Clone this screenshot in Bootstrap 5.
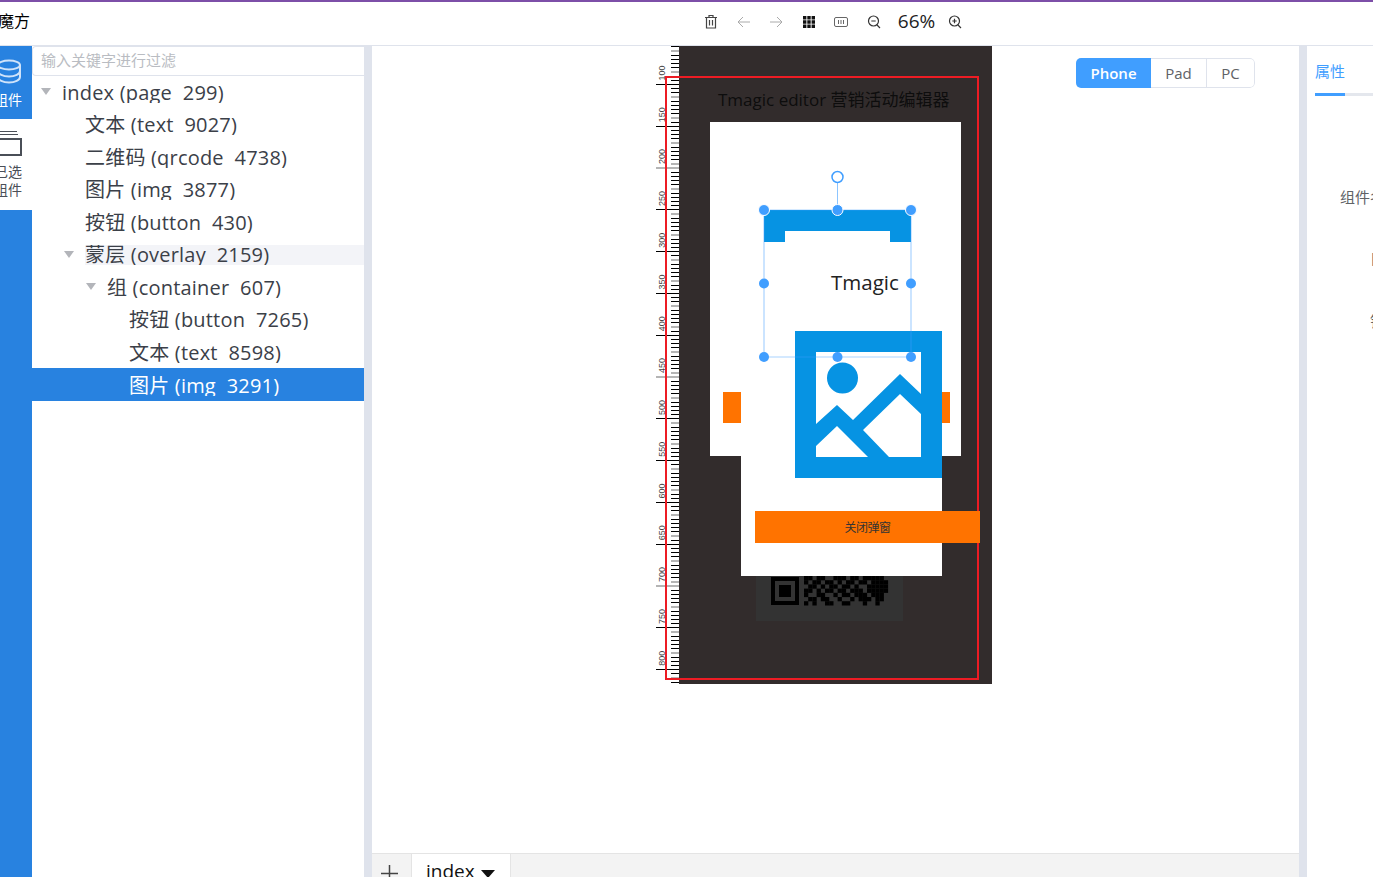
<!DOCTYPE html>
<html lang="zh">
<head>
  <meta charset="UTF-8">
  <meta name="viewport" content="width=device-width, initial-scale=1">
  <title>魔方</title>
  <link href="https://cdn.jsdelivr.net/npm/bootstrap@5.3.0/dist/css/bootstrap.min.css" rel="stylesheet">
  <style>
    html, body { height: 100%; overflow: hidden; }
    body { font-family: "Open Sans", "Noto Sans CJK SC", sans-serif; color: #303133; background: #fff; }
    .app-shell { height: 877px; border-top: 2px solid #7d4fa8; }
    .top-bar { height: 44px; border-bottom: 1px solid #dfe3ec; }
    .brand-name { width: 331px; margin-left: -2px; font-size: 16px; color: #000; margin-top: -5px; flex: none; }
    .tool-strip { margin-left: 366px; margin-bottom: 4px; }
    .tool-slot { width: 32.5px; height: 24px; display: flex; align-items: center; justify-content: center; }
    .zoom-text { font-size: 19px; color: #222; width: 49px; padding-left: 4px; text-align: center; margin-top: -1px; }

    .work-row { height: 831px; }
    .side-rail { width: 32px; background: #2882e0; flex: none; overflow: hidden; }
    .rail-item { height: 73px; background: #2882e0; color: #fff; font-size: 14px; line-height: 20px; overflow: hidden; white-space: nowrap; }
    .rail-item.rail-off { background: #fff; color: #4a4f57; height: 91px; line-height: 18px; }
    .rail-item svg { display: block; }
    .rail-text { margin-left: -6px; }

    .tree-pane { width: 332px; flex: none; position: relative; }
    .tree-filter { height: 29.5px; border: 1px solid #dfe3ec; border-width: 1px 0 1px 1px; border-radius: 4px 0 0 4px; font-size: 15px; color: #b9bcc2; padding: 1px 8px; line-height: 24px; white-space: nowrap; }
    .tree-row { height: 32.5px; display: flex; align-items: center; font-size: 20px; letter-spacing: .2px; color: #3b4048; white-space: pre; }
    .tree-row.picked { background: #2882e0; color: #fff; height: 33px; }
    .tree-label { display: block; height: 20px; line-height: 20px; overflow: hidden; margin-top: 2px; }
    .tree-row.hovered .tree-label { background: #f3f4f8; flex: 1; }
    .tree-caret { width: 0; height: 0; border: 5px solid transparent; border-top: 7px solid #b3b5ba; border-bottom: 0; margin-right: 11px; flex: none; }
    .lvl-0 { padding-left: 9px; }
    .lvl-1 { padding-left: 53px; }
    .lvl-1c { padding-left: 32px; }
    .lvl-2c { padding-left: 54px; }
    .lvl-3 { padding-left: 97px; }

    .split-bar { width: 8px; flex: none; background: #dfe3ec; }

    .stage { flex: 1; position: relative; overflow: hidden; background: #fff; }
    .stage-tabs { position: absolute; left: 0; right: 0; bottom: 0; height: 24px; background: #f3f3f3; border-top: 1px solid #e4e4e4; display: flex; overflow: hidden; }
    .tab-add { width: 40px; border-right: 1px solid #e4e4e4; padding: 11px 0 0 9px; }
    .tab-add svg { display: block; }
    .tab-page { width: 99px; background: #fff; border-right: 1px solid #e4e4e4; font-size: 19px; color: #111; padding: 0 0 0 14px; line-height: 34px; white-space: nowrap; }
    .tab-arrow { display: inline-block; width: 0; height: 0; border: 7px solid transparent; border-top: 8px solid #111; border-bottom: 0; margin-left: 6px; vertical-align: 0; }

    .view-switch { position: absolute; left: 704px; top: 12px; height: 30px; border-radius: 5px; overflow: hidden; display: flex; font-size: 15px; line-height: 28px; color: #606266; }
    .view-opt { text-align: center; background: #fff; border: 1px solid #dfe3ec; border-left: 0; }
    .view-opt.on { background: #409eff; color: #fff; font-weight: 600; border: 0; line-height: 30px; width: 75px; }
    .opt-pad { width: 56px; }
    .opt-pc { width: 48px; border-radius: 0 5px 5px 0; }

    /* canvas stage, coordinates relative to .stage */
    .ruler-art { position: absolute; left: 280px; top: 0; }
    .phone-bg { position: absolute; left: 307px; top: 0; width: 313px; height: 638px; background: #322c2c; }
    .phone-title { position: absolute; left: 346px; top: 42px; font-size: 17px; color: #0d0d0d; white-space: nowrap; line-height: 24px; }
    .white-slab { position: absolute; left: 338px; top: 75.500px; width: 251px; height: 334px; background: #fff; }
    .orange-left { position: absolute; left: 351px; top: 345.500px; width: 19px; height: 31px; background: #ff7300; }
    .orange-right { position: absolute; left: 568px; top: 345.500px; width: 10px; height: 31px; background: #ff7300; }
    .qr-tile { position: absolute; left: 384px; top: 530px; width: 147px; height: 45px; background: #333333; }
    .overlay-card { position: absolute; left: 369px; top: 196px; width: 201px; height: 334px; background: #fff; }
    .photo-a { position: absolute; left: 392px; top: 164px; }
    .photo-b { position: absolute; left: 423px; top: 284.500px; }
    .tmagic-word { position: absolute; left: 459px; top: 223px; font-size: 20.500px; line-height: 26px; color: #222; }
    .close-btn { position: absolute; left: 383px; top: 465px; width: 225px; height: 32px; background: #ff7300; color: #333; font-size: 12px; line-height: 33px; text-align: center; letter-spacing: -.5px; }
    .frame-red { position: absolute; left: 293px; top: 30px; width: 314px; height: 604px; border: 2px solid #ed1c24; pointer-events: none; }
    .select-art { position: absolute; left: 380px; top: 120px; }

    .prop-pane { width: 66px; flex: none; overflow: hidden; position: relative; font-size: 15px; color: #606266; }
    .prop-tab { color: #409eff; font-size: 15px; padding: 15px 0 0; margin-left: 8px; height: 50px; line-height: 20px; border-bottom: 3px solid #e4e7ed; position: relative; white-space: nowrap; }
    .prop-tab::after { content: ""; position: absolute; left: 0; width: 30px; bottom: -3px; height: 3px; background: #409eff; }
    .prop-field { position: absolute; white-space: nowrap; line-height: 20px; }
    .field-name { left: 33px; top: 141px; }
    .field-auto { left: 63px; top: 202px; }
    .field-lock { left: 63px; top: 265px; }
  </style>
</head>
<body>
  <div class="app-shell">
    <div class="top-bar d-flex align-items-center">
      <div class="brand-name">魔方</div>
      <div class="tool-strip d-flex align-items-center">
        <div class="tool-slot"><svg width="14" height="15" viewBox="0 0 14 15" fill="none" stroke="#444" stroke-width="1.200"><path d="M1 3.500h12M5 3.500V1.500h4v2M2.500 3.500v10.500h9V3.500M5.500 6v5.500M8.500 6v5.500"/></svg></div>
        <div class="tool-slot"><svg width="14" height="12" viewBox="0 0 14 12" fill="none" stroke="#aaa" stroke-width="1"><path d="M13 6H1M6 1L1 6l5 5"/></svg></div>
        <div class="tool-slot"><svg width="14" height="12" viewBox="0 0 14 12" fill="none" stroke="#aaa" stroke-width="1"><path d="M1 6h12M8 1l5 5-5 5"/></svg></div>
        <div class="tool-slot"><svg width="12" height="12" viewBox="0 0 12 12" fill="#111"><path d="M0 0h3.400v3.400H0zM4.300 0h3.400v3.400H4.300zM8.600 0H12v3.400H8.600zM0 4.300h3.400v3.400H0zM4.300 4.300h3.400v3.400H4.300zM8.600 4.300H12v3.400H8.600zM0 8.600h3.400V12H0zM4.300 8.600h3.400V12H4.300zM8.600 8.600H12V12H8.600z"/></svg></div>
        <div class="tool-slot"><svg width="14" height="12" viewBox="0 0 14 12" fill="none" stroke="#666" stroke-width="1"><rect x=".5" y="1.500" width="13" height="9" rx="1.500"/><path d="M4.500 4v4M7 4v4M9.500 4v4"/></svg></div>
        <div class="tool-slot"><svg width="14" height="14" viewBox="0 0 14 14" fill="none" stroke="#333" stroke-width="1.200"><circle cx="6.500" cy="6" r="5"/><path d="M10 10l3 3M4.300 6h4.400"/></svg></div>
        <div class="zoom-text">66%</div>
        <div class="tool-slot"><svg width="14" height="14" viewBox="0 0 14 14" fill="none" stroke="#333" stroke-width="1.200"><circle cx="6.500" cy="6" r="5"/><path d="M10 10l3 3M4.300 6h4.400M6.500 3.800v4.400"/></svg></div>
      </div>
    </div>

    <div class="work-row d-flex">
      <div class="side-rail">
        <div class="rail-item">
          <svg width="32" height="44" viewBox="0 0 32 44" fill="none" stroke="#cfe3fa" stroke-width="2"><ellipse cx="9" cy="19" rx="11" ry="4.500"/><path d="M-2 19v12c0 3 5 5.500 11 5.500s11-2.500 11-5.500V19M-2 25c0 3 5 5.500 11 5.500s11-2.500 11-5.500"/></svg>
          <div class="rail-text">组件</div>
        </div>
        <div class="rail-item rail-off">
          <svg width="32" height="44" viewBox="0 0 32 44" fill="none" stroke="#4a4f57"><path d="M-2 12.500h19M-2 15.500h20" stroke-width="1"/><path d="M-2 20h23v16H-2" stroke-width="2"/></svg>
          <div class="rail-text">已选</div>
          <div class="rail-text">组件</div>
        </div>
      </div>

      <div class="tree-pane">
        <div class="tree-filter">输入关键字进行过滤</div>
        <div class="tree-row lvl-0"><i class="tree-caret"></i><span class="tree-label">index (page  299)</span></div>
        <div class="tree-row lvl-1"><span class="tree-label">文本 (text  9027)</span></div>
        <div class="tree-row lvl-1"><span class="tree-label">二维码 (qrcode  4738)</span></div>
        <div class="tree-row lvl-1"><span class="tree-label">图片 (img  3877)</span></div>
        <div class="tree-row lvl-1"><span class="tree-label">按钮 (button  430)</span></div>
        <div class="tree-row lvl-1c hovered"><i class="tree-caret"></i><span class="tree-label">蒙层 (overlay  2159)</span></div>
        <div class="tree-row lvl-2c"><i class="tree-caret"></i><span class="tree-label">组 (container  607)</span></div>
        <div class="tree-row lvl-3"><span class="tree-label">按钮 (button  7265)</span></div>
        <div class="tree-row lvl-3"><span class="tree-label">文本 (text  8598)</span></div>
        <div class="tree-row lvl-3 picked"><span class="tree-label">图片 (img  3291)</span></div>
      </div>
      <div class="split-bar"></div>

      <div class="stage">
        <div class="phone-bg"></div>
        <svg class="ruler-art" id="rulerArt" width="27" height="640" viewBox="0 0 27 640"></svg>
        <div class="phone-title">Tmagic editor 营销活动编辑器</div>
        <div class="white-slab"></div>
        <div class="orange-left"></div>
        <div class="orange-right"></div>
        <div class="frame-red"></div>
        <div class="qr-tile">
          <svg id="qrArt" width="147" height="45" viewBox="0 0 147 45" fill="#000"><path fill-rule="evenodd" d="M15 1h28v28H15zM19 5v20h20V5zM23 9h12v12H23z"/></svg>
        </div>
        <div class="overlay-card"></div>
        <div class="photo-a">
          <svg width="147" height="32" viewBox="0 0 147 32" fill="#0693e3"><path d="M0 0h147v32h-21V21H21v11H0z"/></svg>
        </div>
        <div class="tmagic-word">Tmagic</div>
        <div class="photo-b">
          <svg width="147" height="147" viewBox="0 0 147 147" fill="#0693e3"><path fill-rule="evenodd" d="M0 0h147v147H0zM21 21v105h105V21z"/><circle cx="47.500" cy="47" r="15.500"/><path d="M21 93l21-19 16 15 47-46 21 20v20l-21-20-37 36 26 27H73L42 95 21 115z"/></svg>
        </div>
        <div class="close-btn">关闭弹窗</div>
        <svg class="select-art" width="170" height="200" viewBox="380 120 170 200" fill="#409eff">
          <path d="M392 164h147v147H392z" fill="none" stroke="#409eff" stroke-opacity=".45" stroke-width="1.200"/>
          <path d="M465.500 136v28" stroke="#409eff" stroke-opacity=".6" fill="none"/>
          <circle cx="465.500" cy="131" r="5.500" fill="#fff" stroke="#409eff" stroke-width="1.500"/>
          <g stroke="#fff"><circle cx="392" cy="164" r="5.500"/><circle cx="465.500" cy="164" r="5.500"/><circle cx="539" cy="164" r="5.500"/></g>
          <circle cx="392" cy="237.500" r="5"/><circle cx="539" cy="237.500" r="5"/><circle cx="392" cy="311" r="5"/><circle cx="465.500" cy="311" r="5"/><circle cx="539" cy="311" r="5"/>
        </svg>
        <div class="view-switch">
          <div class="view-opt on">Phone</div>
          <div class="view-opt opt-pad">Pad</div>
          <div class="view-opt opt-pc">PC</div>
        </div>
        <div class="stage-tabs">
          <div class="tab-add"><svg width="17" height="17" viewBox="0 0 17 17" stroke="#444" stroke-width="1.500"><path d="M0 8.500h17M8.500 0v17"/></svg></div>
          <div class="tab-page">index<i class="tab-arrow"></i></div>
        </div>
      </div>
      <div class="split-bar"></div>

      <div class="prop-pane">
        <div class="prop-tab">属性</div>
        <div class="prop-field field-name">组件名称</div>
        <div class="prop-field field-auto">自</div>
        <div class="prop-field field-lock">锁</div>
      </div>
    </div>
  </div>

  <script>
    // ruler ticks, 4.18px per 5 units, one label per 50 units
    // ticks that land near a half pixel come out as a 2px grey line, the rest are crisp
    const ruler = document.getElementById('rulerArt');
    let marks = '';
    for (let k = -9; k < 144; k++) {
      const y = 38 + k * 4.18;
      const x = ((k % 10) + 10) % 10 === 0 ? 4 : 19;
      const frac = y - Math.floor(y);
      if (frac > 0.4 && frac < 0.6) {
        marks += `<rect x="${x}" y="${Math.floor(y)}" width="${27 - x}" height="2" fill="#b5b5b5"/>`;
      } else {
        marks += `<rect x="${x}" y="${Math.round(y)}" width="${27 - x}" height="1" fill="#000"/>`;
      }
    }
    for (let n = 100; n <= 800; n += 50) {
      const y = 27 + (n - 100) * 0.836;
      marks += `<text transform="translate(13 ${y}) rotate(-90)" text-anchor="middle" font-size="9" fill="#444" font-family="Liberation Sans, sans-serif">${n}</text>`;
    }
    ruler.innerHTML = marks;

    // data modules of the qr code that show below the overlay
    const qrRows = [
      '11011001110110111110',
      '10110110101101101111',
      '01101011011010011111',
      '11010110110111011111',
      '10011001011011101110',
      '01101100100101110110',
      '10100110011000100100'
    ];
    let cells = '';
    qrRows.forEach((row, r) => {
      [...row].forEach((bit, c) => {
        if (bit === '1') cells += `<rect x="${48 + c * 4.2}" y="${r * 4.2}" width="4.3" height="4.3"/>`;
      });
    });
    document.getElementById('qrArt').insertAdjacentHTML('beforeend', cells);
  </script>
  <script src="https://cdn.jsdelivr.net/npm/bootstrap@5.3.0/dist/js/bootstrap.bundle.min.js"></script>
</body>
</html>
